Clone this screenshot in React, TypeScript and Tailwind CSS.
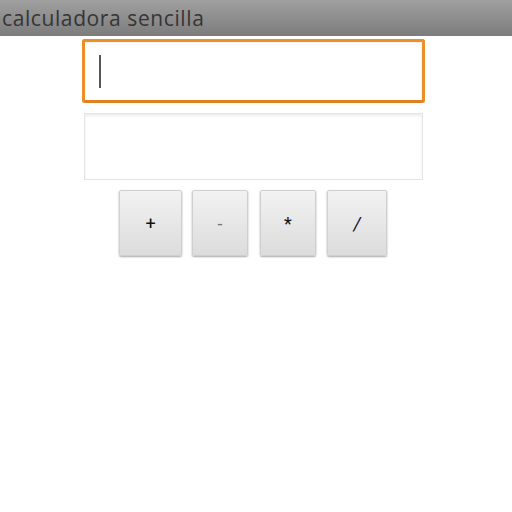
export default function App() {
  return (
    <div className="w-[512px] h-[512px] bg-white flex flex-col" style={{ fontFamily: 'Roboto, "Liberation Sans", sans-serif' }}>
      <div className="h-[36px] shrink-0 bg-gradient-to-b from-[#a0a0a0] to-[#7c7c7c] flex items-center pl-[2px]">
        <span className="text-[21px] tracking-[0.6px] text-[#353535] leading-none" style={{ fontFamily: '"Open Sans", sans-serif' }}>calculadora sencilla</span>
      </div>
      <div className="flex flex-col items-start">
        <div className="mt-[3px] ml-[82px] w-[343px] h-[64px] rounded-[3px] border-[3px] border-[#ec8f27] border-b-[#e0801f] bg-white flex items-center pl-[14px] shadow-[inset_0_1px_3px_rgba(0,0,0,0.08)]">
          <div className="w-[2px] h-[33px] bg-[#555]" />
        </div>
        <div className="mt-[10px] ml-[84px] w-[339px] h-[67px] border border-[#e4e4e4] bg-white shadow-[inset_0_2px_3px_rgba(0,0,0,0.07)]" />
        <div className="mt-[10px] ml-[119px] flex">
          <button className="w-[63px] h-[66px] rounded-[2px] bg-gradient-to-b from-[#f2f2f2] to-[#dcdcdc] border border-[#cfcfcf] shadow-[0_1px_2px_rgba(0,0,0,0.35)] text-[18px] text-[#111]">+</button>
          <button className="ml-[10px] w-[56px] h-[66px] rounded-[2px] bg-gradient-to-b from-[#f2f2f2] to-[#dcdcdc] border border-[#cfcfcf] shadow-[0_1px_2px_rgba(0,0,0,0.35)] text-[18px] text-[#777]">-</button>
          <button className="ml-[12px] w-[56px] h-[66px] rounded-[2px] bg-gradient-to-b from-[#f2f2f2] to-[#dcdcdc] border border-[#cfcfcf] shadow-[0_1px_2px_rgba(0,0,0,0.35)] text-[18px] text-[#111]">*</button>
          <button className="ml-[11px] w-[60px] h-[66px] rounded-[2px] bg-gradient-to-b from-[#f2f2f2] to-[#dcdcdc] border border-[#cfcfcf] shadow-[0_1px_2px_rgba(0,0,0,0.35)] text-[18px] text-[#111] italic">/</button>
        </div>
      </div>
    </div>
  );
}
